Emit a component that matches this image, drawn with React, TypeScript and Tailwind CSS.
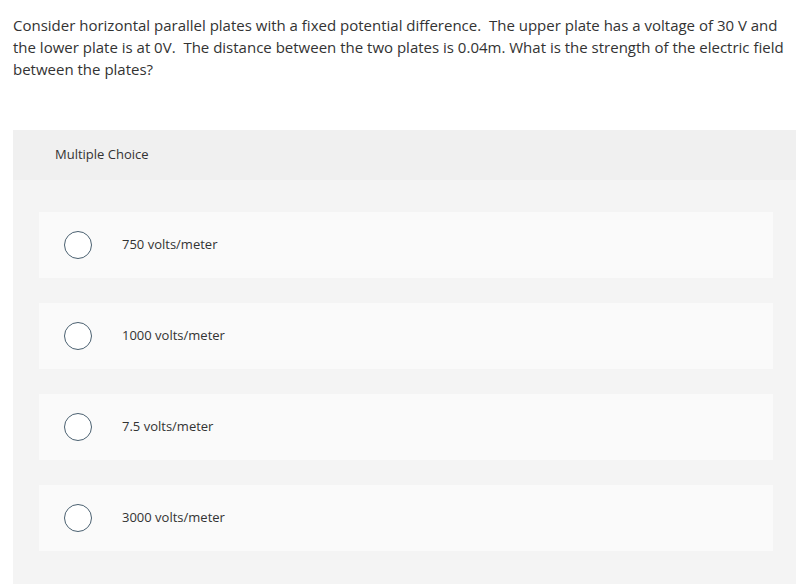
const options = ['750 volts/meter', '1000 volts/meter', '7.5 volts/meter', '3000 volts/meter'];

export default function App() {
  return (
    <div className="w-[796px] h-[584px] overflow-hidden bg-white text-[#333]" style={{ fontFamily: '"Open Sans", Lato, sans-serif' }}>
      {/* Question */}
      <div className="pl-[13px] pt-[14px] text-[15px] leading-[22px] whitespace-pre">
        <div>Consider horizontal parallel plates with a fixed potential difference.  The upper plate has a voltage of 30 V and</div>
        <div>the lower plate is at 0V.  The distance between the two plates is 0.04m. What is the strength of the electric field</div>
        <div>between the plates?</div>
      </div>

      {/* Answer panel */}
      <div className="ml-[13px] mt-[50px] bg-[#f4f4f4] h-[460px]">
        <div className="h-[50px] bg-[#f0f0f0] flex items-center pl-[42px] text-[13px]">Multiple Choice</div>
        <div className="pt-[32px] pl-[26px] pr-[23px] flex flex-col gap-[25px]">
          {options.map((opt) => (
            <div key={opt} className="h-[66px] bg-[#fafafa] flex items-center pl-[25px]">
              <div className="w-[28px] h-[28px] rounded-full border-[1.5px] border-[#4a6070] bg-white" />
              <span className="ml-[30px] text-[13px]">{opt}</span>
            </div>
          ))}
        </div>
      </div>
    </div>
  );
}
